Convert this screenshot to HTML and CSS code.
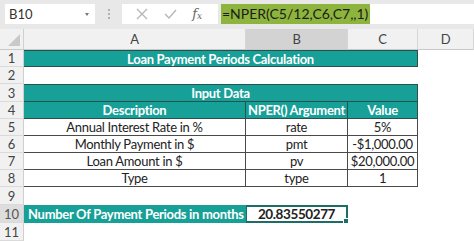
FILE: index.html
```html
<!DOCTYPE html>
<html lang="en">
<head>
  <meta charset="UTF-8">
  <title>NPER</title>
  <link rel="stylesheet" href="styles.css">
</head>
<body>

<div class="toolbar">
  <div class="namebox">
    <span>B10</span>
    <span class="caret"></span>
  </div>
  <div class="dots"><i></i><i></i><i></i></div>
  <div class="buttons">
    <svg width="12" height="12" viewBox="0 0 12 12"><path d="M1 1 L11 11 M11 1 L1 11" stroke="#b5b5b5" stroke-width="1.3" fill="none"/></svg>
    <svg width="13" height="10" viewBox="0 0 13 10"><path d="M1 5 L5 9 L12 1" stroke="#b5b5b5" stroke-width="1.3" fill="none"/></svg>
    <span class="fx">f<sub>x</sub></span>
  </div>
  <div class="formula">
    <span class="formula-text">=NPER(C5/12,C6,C7,,1)</span>
  </div>
</div>

<div class="sheet">
  <!-- column headers -->
  <div class="corner"><span class="tri"></span></div>
  <div class="colhead">A</div>
  <div class="colhead sel">B</div>
  <div class="colhead">C</div>
  <div class="colhead">D</div>

  <!-- row 1 -->
  <div class="rowhead">1</div>
  <div class="cell teal bold span3 top">Loan Payment Periods Calculation</div>
  <div class="cell"></div>

  <!-- row 2 -->
  <div class="rowhead">2</div>
  <div class="cell span4"></div>

  <!-- row 3 -->
  <div class="rowhead">3</div>
  <div class="cell teal bold span3 top">Input Data</div>
  <div class="cell"></div>

  <!-- row 4 -->
  <div class="rowhead">4</div>
  <div class="cell teal bold bx">Description</div>
  <div class="cell teal bold bx">NPER() Argument</div>
  <div class="cell teal bold bx">Value</div>
  <div class="cell"></div>

  <!-- row 5 -->
  <div class="rowhead">5</div>
  <div class="cell bx">Annual Interest Rate in %</div>
  <div class="cell bx">rate</div>
  <div class="cell bx">5%</div>
  <div class="cell"></div>

  <!-- row 6 -->
  <div class="rowhead">6</div>
  <div class="cell bx">Monthly Payment in $</div>
  <div class="cell bx">pmt</div>
  <div class="cell bx">-$1,000.00</div>
  <div class="cell"></div>

  <!-- row 7 -->
  <div class="rowhead">7</div>
  <div class="cell bx">Loan Amount in $</div>
  <div class="cell bx">pv</div>
  <div class="cell bx">$20,000.00</div>
  <div class="cell"></div>

  <!-- row 8 -->
  <div class="rowhead">8</div>
  <div class="cell bx">Type</div>
  <div class="cell bx">type</div>
  <div class="cell bx">1</div>
  <div class="cell"></div>

  <!-- row 9 -->
  <div class="rowhead">9</div>
  <div class="cell span4"></div>

  <!-- row 10 -->
  <div class="rowhead sel">10</div>
  <div class="cell teal bold left-text">Number Of Payment Periods in months</div>
  <div class="cell active bold big">20.83550277<span class="handle"></span></div>
  <div class="cell span2"></div>

  <!-- row 11 -->
  <div class="rowhead">11</div>
  <div class="cell span4"></div>
</div>

</body>
</html>
```

FILE: styles.css
```css
body {
  margin: 0;
  background-color: white;
  font-family: Lato, "Liberation Sans", sans-serif;
  color: #222;
  overflow: hidden;
}

/* formula bar */

.toolbar {
  height: 29px;
  background-color: #e8e8e8;
  display: flex;
  align-items: flex-start;
  padding-top: 4px;
  box-sizing: border-box;
}

.namebox {
  margin-left: 5px;
  width: 90px;
  height: 20px;
  background-color: white;
  display: flex;
  align-items: center;
  justify-content: space-between;
  padding: 0 6px 0 4px;
  box-sizing: border-box;
  font-size: 13px;
  color: #333;
}

.caret {
  width: 0;
  height: 0;
  border-left: 2px solid transparent;
  border-right: 2px solid transparent;
  border-top: 3px solid #777;
}

.dots {
  width: 27px;
  height: 20px;
  display: flex;
  flex-direction: column;
  align-items: center;
  justify-content: center;
  gap: 2px;
}

.dots i {
  width: 2px;
  height: 2px;
  background-color: #b0b0b0;
}

.buttons {
  width: 96px;
  height: 20px;
  background-color: white;
  display: flex;
  align-items: center;
  justify-content: space-around;
  padding: 0 8px 0 6px;
  box-sizing: border-box;
}

.fx {
  font-family: "DejaVu Serif", serif;
  font-style: italic;
  font-size: 13px;
  color: #666;
  line-height: 1;
}

.fx sub {
  font-size: 9px;
  vertical-align: -1px;
}

.formula {
  margin-left: 3px;
  flex: 1;
  height: 20px;
  background-color: white;
  display: flex;
}

.formula-text {
  background-color: #8db43c;
  width: 149px;
  height: 20px;
  line-height: 20px;
  padding-left: 1px;
  box-sizing: border-box;
  font-size: 14px;
  color: #1b1b1b;
  white-space: nowrap;
}

/* sheet */

.sheet {
  display: grid;
  grid-template-columns: 24px 222px 102px 70px 1fr;
  grid-template-rows: 21px 17px 17px 18px 17px 17px 17px 17px 17px 18px 18px 18px;
  font-size: 13px;
  letter-spacing: -0.3px;
}

.corner {
  background-color: #f1f1f1;
  border-right: 1px solid #d0d0d0;
  border-bottom: 1px solid #c8c8c8;
  position: relative;
}

.tri {
  position: absolute;
  right: 3px;
  bottom: 3px;
  width: 0;
  height: 0;
  border-left: 12px solid transparent;
  border-bottom: 12px solid #c9c9c9;
}

.colhead {
  background-color: #f1f1f1;
  border-right: 1px solid #d6d6d6;
  border-bottom: 1px solid #c8c8c8;
  display: flex;
  align-items: center;
  justify-content: center;
  color: #444;
  font-size: 13px;
}

.colhead.sel {
  background-color: #d3d3d3;
}

.rowhead {
  background-color: #f1f1f1;
  border-right: 1px solid #cfcfcf;
  border-bottom: 1px solid #dadada;
  display: flex;
  align-items: center;
  justify-content: center;
  color: #444;
  font-size: 13px;
  letter-spacing: 0;
}

.rowhead.sel {
  background-color: #dddddd;
  color: #555;
}

.cell {
  display: flex;
  align-items: center;
  justify-content: center;
  white-space: nowrap;
  box-sizing: border-box;
  position: relative;
}

.span2 { grid-column: span 2; }
.span3 { grid-column: span 3; }
.span4 { grid-column: span 4; }

.teal {
  background-color: #17a097;
  color: white;
}

.bold {
  font-weight: bold;
}

.big {
  font-size: 13.5px;
  letter-spacing: -0.4px;
}

.top {
  border-top: 1px solid #2f4f4d;
  border-bottom: 1px solid #2f4f4d;
  border-right: 1px solid #2f4f4d;
}

.bx {
  border-right: 1px solid #4a4a4a;
  border-bottom: 1px solid #4a4a4a;
}

.teal.bx {
  border-color: #2f4f4d;
}

.left-text {
  justify-content: flex-start;
  padding-left: 4px;
}

.active {
  border: 2px solid #1c6d67;
  border-left-width: 1px;
}

.handle {
  position: absolute;
  right: -3px;
  bottom: -3px;
  width: 4px;
  height: 4px;
  background-color: #1c6d67;
  border: 1px solid white;
}
```
